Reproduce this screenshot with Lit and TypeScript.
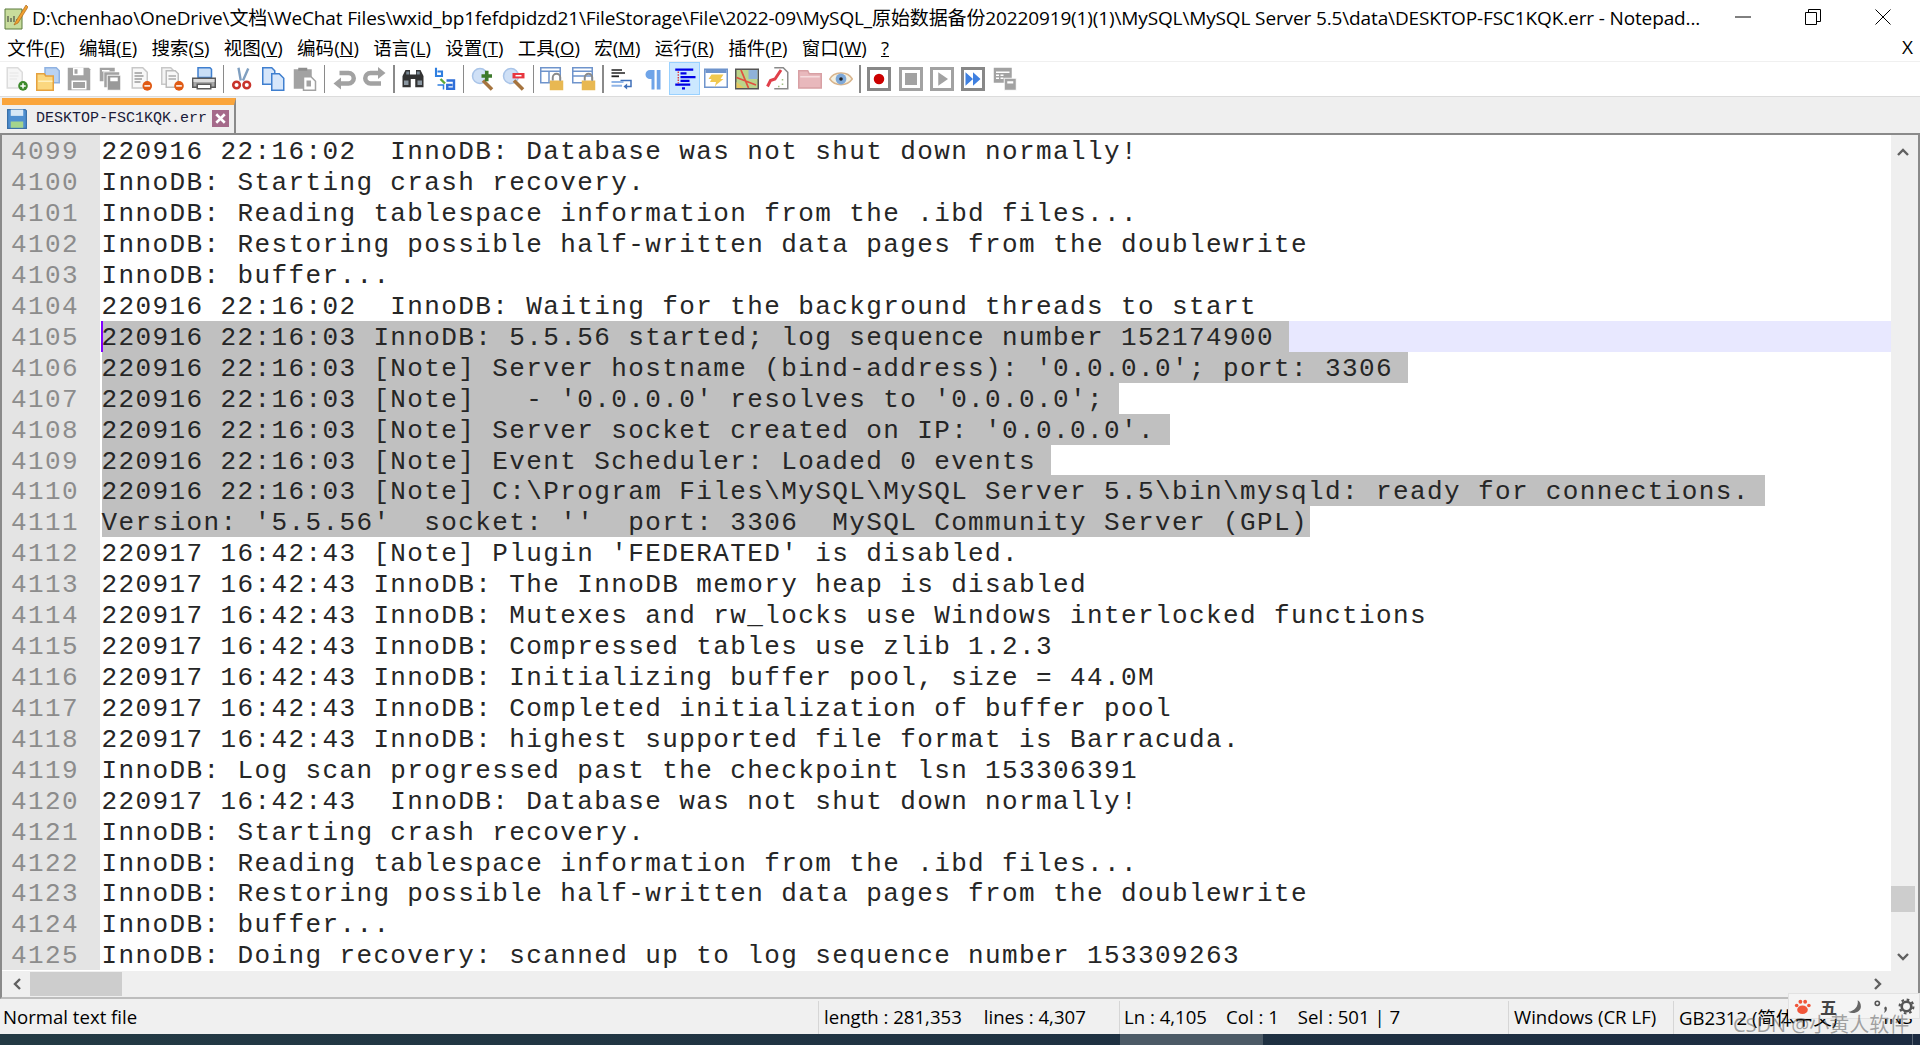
import { LitElement, html, css, svg, nothing } from "lit";
import { customElement } from "lit/decorators.js";

const G = "#a2a2a2";
const icons: Record<string, any> = {
  new: svg`<path d="M1.5.5h7l3 3v10.5h-10z" fill="#f6f6f6" stroke="#dcdcdc"/><path d="M3 4h6M3 6h6M3 8h5" stroke="#ececec"/><circle cx="12" cy="12.6" r="3.2" fill="#3c8a2c"/><path d="M10.2 12.6h3.6M12 10.8v3.6" stroke="#fff"/>`,
  open: svg`<path d="M6 .5h7.5l2 2v8H6z" fill="#b9d2f2" stroke="#8fb2e2"/><path d="M.5 4.5h5l1 1.5h5v9.5H.5z" fill="#fbd77f" stroke="#e5a13f"/><path d="M1.5 9h9.5v1H1.5z" fill="#fff0bd"/>`,
  save: svg`<path d="M.5.5h14l1 1v14H.5z" fill="${G}"/><path d="M4 .5h7v5H4zM3 9h10v6H3z" fill="#fff"/><path d="M5 1.5h2v3H5zM4 10h8v4H4z" fill="${G}"/>`,
  saveall: svg`<path d="M.5.5h10v9H.5z" fill="${G}"/><path d="M3 3h10v10H3z" fill="#fff"/><path d="M3.5 3.5h10v10h-10z" fill="${G}"/><path d="M5.5 5.5h9v10h-9z" fill="#999" stroke="#fff" stroke-width=".6"/><path d="M7.5 7h5v2.5h-5z" fill="#fff"/><path d="M2 2h5v1H2z" fill="#fff"/>`,
  close: svg`<path d="M1.5.5h7l3 3v10.5h-10z" fill="#f8f8f8" stroke="#c8c8c8"/><path d="M3 4h5M3 6h6M3 8h5M3 10h4" stroke="#9a9a9a"/><circle cx="11.5" cy="12.6" r="3.2" fill="#e05a14"/><path d="M9.6 12.6h3.8" stroke="#fff"/>`,
  closeall: svg`<path d="M.5.5h6l2 2v9h-8z" fill="#f4f4f4" stroke="#c8c8c8"/><path d="M3.5 2.5h6l2 2v9h-8z" fill="#f8f8f8" stroke="#bcbcbc"/><path d="M5 6h5M5 8h5" stroke="#aaa"/><circle cx="12" cy="12.6" r="3.2" fill="#e05a14"/><path d="M10.1 12.6h3.8" stroke="#fff"/>`,
  print: svg`<path d="M4 .5h8l1 1V7H4z" fill="#c9def6" stroke="#3f7fcf"/><path d="M.5 7.5h15v6H.5z" fill="#a8a8a8" stroke="#5a5a5a"/><path d="M1 8h14v2H1z" fill="#dcdcdc"/><path d="M3.5 11.5h9v3h-9z" fill="#fff" stroke="#5a5a5a"/>`,
  cut: svg`<path d="M6.5 9 5 .5 M8 9 11.5 1" stroke="#7f9fc0" stroke-width="1.6"/><circle cx="3.7" cy="12" r="2.2" fill="none" stroke="#c8332b" stroke-width="1.7"/><circle cx="10.5" cy="12" r="2.2" fill="none" stroke="#c8332b" stroke-width="1.7"/>`,
  copy: svg`<path d="M.5.5h6l2 2v9h-8z" fill="#d6e6fa" stroke="#3f7fcf"/><path d="M6.5 4.5h5l3 3v8h-8z" fill="#d6e6fa" stroke="#3f7fcf"/>`,
  paste: svg`<path d="M.5 1.5h12v13H.5z" fill="${G}" /><path d="M3.5.5h6v2h-6z" fill="#8e8e8e"/><path d="M7 6.5h5l3 3v6H7z" fill="#fff" stroke="${G}"/><path d="M9 9h3v4H9z" fill="${G}"/>`,
  undo: svg`<path d="M5 4h6a3 3 0 0 1 0 7H4" fill="none" stroke="${G}" stroke-width="3"/><path d="M1 11 6 7v8z" fill="${G}"/>`,
  redo: svg`<path d="M11 4H5a3 3 0 0 0 0 7h7" fill="none" stroke="${G}" stroke-width="3"/><path d="M15 5 10 1v8z" fill="${G}" transform="translate(0 -1)"/>`,
  find: svg`<path d="M1 6 3 2h3v3h4V2h3l2 4v7.5H9.5V8h-3v5.5H1z" fill="#333"/><path d="M2 9h3v3H2zM11 9h3v3h-3z" fill="#8a96a0"/><path d="M3.5 3h2v2h-2zM10.5 3h2v2h-2z" fill="#7c8a96"/>`,
  replace: svg`<path d="M2 .5v5.5h4V3H3" fill="none" stroke="#2f7fe0" stroke-width="1.4"/><path d="M9 9h5v5.5H9.5V12H13" fill="none" stroke="#2f6fd8" stroke-width="1.6"/><path d="M5 8l3 3" stroke="#5aa83c" stroke-width="1.6"/><path d="M3 12h4v3" fill="none" stroke="#2f7fe0"/>`,
  zoomin: svg`<circle cx="6" cy="6" r="5" fill="#cfe0f6" stroke="#a9c4e8"/><path d="M8 9l6 6" stroke="#a6743f" stroke-width="2.4"/><path d="M10.5 2.5v7M7 6h7" stroke="#3c7a2c" stroke-width="2.4"/>`,
  zoomout: svg`<circle cx="6" cy="6" r="5" fill="#cfe0f6" stroke="#a9c4e8"/><path d="M8 9l6 6" stroke="#a6743f" stroke-width="2.4"/><path d="M7 4h8v3.6H7z" fill="#e8363f"/><path d="M9 5.8h4" stroke="#fff"/>`,
  syncv: svg`<path d="M.5.5h13v10H.5zM.5 2.8h13M6 3v7" fill="#fff" stroke="#6f94cc"/><path d="M6.5 9h9v6.5h-9z" fill="#e8b852"/><path d="M8.5 9V7a2.5 2.5 0 0 1 5 0v2" fill="none" stroke="#8a8a8a" stroke-width="1.3"/>`,
  synch: svg`<path d="M.5.5h13v10H.5zM.5 2.8h13M.5 6h13" fill="#fff" stroke="#6f94cc"/><path d="M6.5 9h9v6.5h-9z" fill="#e8b852"/><path d="M8.5 9V7a2.5 2.5 0 0 1 5 0v2" fill="none" stroke="#8a8a8a" stroke-width="1.3"/>`,
  wrap: svg`<path d="M1 2h7M1 4h9" stroke="#222" stroke-width=".9"/><path d="M1 6.2h5" stroke="#222" stroke-width="1.2"/><path d="M7 9h7v4h-3" fill="none" stroke="#3f6fb8"/><path d="M9 13l2.400-2v4z" fill="#3f6fb8"/><path d="M1 10h8M1 12.500h7" stroke="#8fb4e6" stroke-width="1.2"/>`,
  para: svg`<path d="M10 2H6a3 3 0 0 0 0 6h1v7h2V2zM10 2h3v13h-2.500V2z" fill="#6fa4e8"/>`,
  indent: svg`<path d="M1.500 1h12v1.500h-12zM5 3.500h4v1.500H5zM5 6h10v1.500H5zM5 8.500h6V10H5zM1.500 11h10v1.500h-10zM6 13.500h2V15H6z" fill="#0000e6"/><path d="M3.500 3v8" stroke="#e02020" stroke-dasharray="1 .8" stroke-width=".8"/>`,
  docmap: svg`<path d="M.5 1.500h15v12H.5z" fill="#fff" stroke="#6f94cc"/><path d="M1 2h14v2H1z" fill="#6f94cc"/><path d="M5 5h8l-2 3h2l-5 4-1 2 1-4H4l1-2H3z" fill="#f0c850"/>`,
  map: svg`<path d="M.5 1.500h15v13H.5z" fill="#bcd48a" stroke="#555"/><path d="M9 2h6v6H9z" fill="#8fb2d8"/><path d="M4 2l5 12M1 7l13 5" stroke="#e05040" stroke-width="1.2"/><path d="M1 10l5 4H1z" fill="#e8c860"/>`,
  func: svg`<path d="M5.500.5h6l3 3v11h-9" fill="#fff" stroke="#8a8a8a"/><path d="M10 2 6 8 3 9 1 13" fill="none" stroke="#e0404a" stroke-width="2"/><path d="M11 8v1M11 11v1M8 13h1" stroke="#a0c080"/>`,
  folder: svg`<path d="M.5 2.500h6l1 2h8v9.500H.5z" fill="#e8b8bc" stroke="#d8a0a4"/><path d="M1.500 6h13v1h-13z" fill="#f6dcde"/>`,
  eye: svg`<path d="M.5 8C3 3.500 12 2 15.500 8 12 13 4 13 .5 8z" fill="#f4f0e0" stroke="#d8b48c"/><circle cx="8" cy="8" r="3.600" fill="#7ea8d8"/><circle cx="8" cy="8" r="1.200" fill="#222"/>`,
  rec: svg`<path d="M1 1h14v14H1z" fill="#fff" stroke="#888" stroke-width="2"/><circle cx="8" cy="8" r="3.500" fill="#cc0000"/>`,
  stop: svg`<path d="M1 1h14v14H1z" fill="#fff" stroke="#a2a2a2" stroke-width="2"/><path d="M4 4h8v8H4z" fill="#a2a2a2"/>`,
  play: svg`<path d="M1 1h14v14H1z" fill="#fff" stroke="#a2a2a2" stroke-width="2"/><path d="M5.500 3.500 12 8l-6.500 4.500z" fill="#a2a2a2"/>`,
  playall: svg`<path d="M1 1h14v14H1z" fill="#fff" stroke="#888" stroke-width="2"/><path d="M3 3.500 8 8l-5 4.500zM8 3.500 13 8l-5 4.500z" fill="#3f80e0"/>`,
  savemacro: svg`<path d="M.5.5h12v10h-12z" fill="${G}"/><path d="M2 3h9v1H2zM2 5h2v1H2zM5 5h2v1H5zM2 7h2v1H2zM5 7h2v1H5z" fill="#fff"/><path d="M7.500 7.500h8v8h-8z" fill="${G}" stroke="#fff" stroke-width=".6"/><path d="M9.500 9.500h4v1.500h-4z" fill="#fff"/>`,
};

const tools = [
  ["new", "open", "save", "saveall", "close", "closeall", "print"],
  ["cut", "copy", "paste"],
  ["undo", "redo"],
  ["find", "replace"],
  ["zoomin", "zoomout"],
  ["syncv", "synch"],
  ["wrap", "para", "indent", "docmap", "map", "func", "folder", "eye"],
  ["rec", "stop", "play", "playall", "savemacro"],
];

const menus: [string, string][] = [
  ["文件", "F"], ["编辑", "E"], ["搜索", "S"], ["视图", "V"], ["编码", "N"], ["语言", "L"],
  ["设置", "T"], ["工具", "O"], ["宏", "M"], ["运行", "R"], ["插件", "P"], ["窗口", "W"],
];

const lines: string[] = [
  "220916 22:16:02  InnoDB: Database was not shut down normally!",
  "InnoDB: Starting crash recovery.",
  "InnoDB: Reading tablespace information from the .ibd files...",
  "InnoDB: Restoring possible half-written data pages from the doublewrite",
  "InnoDB: buffer...",
  "220916 22:16:02  InnoDB: Waiting for the background threads to start",
  "220916 22:16:03 InnoDB: 5.5.56 started; log sequence number 152174900",
  "220916 22:16:03 [Note] Server hostname (bind-address): '0.0.0.0'; port: 3306",
  "220916 22:16:03 [Note]   - '0.0.0.0' resolves to '0.0.0.0';",
  "220916 22:16:03 [Note] Server socket created on IP: '0.0.0.0'.",
  "220916 22:16:03 [Note] Event Scheduler: Loaded 0 events",
  "220916 22:16:03 [Note] C:\\Program Files\\MySQL\\MySQL Server 5.5\\bin\\mysqld: ready for connections.",
  "Version: '5.5.56'  socket: ''  port: 3306  MySQL Community Server (GPL)",
  "220917 16:42:43 [Note] Plugin 'FEDERATED' is disabled.",
  "220917 16:42:43 InnoDB: The InnoDB memory heap is disabled",
  "220917 16:42:43 InnoDB: Mutexes and rw_locks use Windows interlocked functions",
  "220917 16:42:43 InnoDB: Compressed tables use zlib 1.2.3",
  "220917 16:42:43 InnoDB: Initializing buffer pool, size = 44.0M",
  "220917 16:42:43 InnoDB: Completed initialization of buffer pool",
  "220917 16:42:43 InnoDB: highest supported file format is Barracuda.",
  "InnoDB: Log scan progressed past the checkpoint lsn 153306391",
  "220917 16:42:43  InnoDB: Database was not shut down normally!",
  "InnoDB: Starting crash recovery.",
  "InnoDB: Reading tablespace information from the .ibd files...",
  "InnoDB: Restoring possible half-written data pages from the doublewrite",
  "InnoDB: buffer...",
  "InnoDB: Doing recovery: scanned up to log sequence number 153309263",
];

@customElement("app-root")
export class AppRoot extends LitElement {
  static styles = css`
    :host { display: block; width: 1920px; height: 1045px; overflow: hidden; position: relative;
      font-family: "Open Sans", "Noto Sans CJK SC", sans-serif; color: #000; background: #f0f0f0; }
    .app { display: flex; flex-direction: column; height: 100%; }
    .title { height: 34px; background: #fff; display: flex; align-items: center; padding: 0 2px 0 4px; font-size: 19px; letter-spacing: -0.13px; }
    .title .logo { width: 24px; height: 26px; flex: none; }
    .title .t { margin-left: 4px; width: 1676px; flex: none; white-space: nowrap; overflow: hidden; }
    .winbtns { margin-left: auto; display: flex; }
    .winbtns svg { width: 16px; height: 16px; display: block; }
    .winbtns div { width: 70px; height: 34px; display: flex; align-items: center; justify-content: center; }
    .menu { height: 27px; background: #fff; display: flex; align-items: center; font-size: 18.5px; border-bottom: 1px solid #f0f0f0; }
    .menu span { padding: 0 7.15px; white-space: nowrap; }
    .menu .x { margin-left: auto; padding: 0 7px 0 0; font-size: 19px; }
    .tools { height: 34px; background: #fff; display: flex; align-items: center; padding-left: 1px; border-bottom: 1px solid #dcdcdc; }
    .slot { width: 31.3px; height: 33px; flex: none; display: flex; align-items: center; justify-content: center; box-sizing: border-box; }
    .slot svg { width: 24px; height: 24px; display: block; }
    .slot.on { background: #cce8ff; border: 1px solid #99d1ff; }
    .sep { width: 7px; height: 28px; flex: none; display: flex; justify-content: center; }
    .sep::before { content: ""; width: 1.5px; background: #8a8a8a; }
    .tabs { height: 37px; background: #efefef; padding-left: 2px; display: flex; }
    .tab { width: 234px; box-sizing: border-box; margin-top: 1px; border-top: 7px solid #faa53c; border-right: 2px solid #8a8a8a;
      display: flex; align-items: center; padding-left: 5px; font: 15px "Liberation Mono", monospace; color: #1a1a3a; }
    .tab svg.s { width: 20px; height: 20px; flex: none; }
    .tab .n { margin-left: 9px; }
    .tab svg.c { width: 17px; height: 17px; margin-left: 5px; flex: none; }
    .editor { display: flex; flex: none; height: 862px; border-top: 2px solid #8a8a8a; border-left: 2px solid #8a8a8a; border-right: 2px solid #8a8a8a; border-bottom: 2px solid #bdbdbd; box-sizing: content-box; background: #efefef; }
    .left { flex: 1; display: flex; flex-direction: column; min-width: 0; }
    .rows { flex: none; background: #fff; height: 835.2px; overflow: hidden; }
    .row { height: 30.93px; display: flex; font: 26px/30.93px "Liberation Mono", monospace; letter-spacing: 1.39px; color: #262626; white-space: pre; }
    .num { width: 98px; flex: none; box-sizing: border-box; padding: 2px 0 0 9px; background: #e4e4e4; color: #8c8c8c; margin-right: 1.5px; }
    .code { flex: 1; min-width: 0; }
    .txt { display: block; position: relative; top: 2px; }
    .cur .code { background: #e8e8ff; position: relative; }
    .cur .code::before { content: ""; position: absolute; left: -1px; top: 0; width: 2px; height: 100%; background: #8000ff; }
    .sel { background: #c0c0c0; display: block; width: fit-content; height: 100%; }
    .sel.eol { padding-right: 15px; }
    .sel.last { padding-right: 2px; }
    .hbar { flex: 1; display: flex; align-items: center; }
    .hbar svg { width: 14px; height: 16px; flex: none; }
    .hthumb { width: 92px; height: 24px; background: #cdcdcd; margin-left: 6px; }
    .vbar { width: 24px; margin-right: 3px; flex: none; display: flex; flex-direction: column; align-items: center; }
    .vbar svg { width: 16px; height: 14px; flex: none; }
    .vbar .up { margin-top: 10px; }
    .vbar .thumb { width: 100%; height: 26px; background: #cdcdcd; margin-top: auto; }
    .vbar .down { margin-top: 38px; margin-bottom: 33px; }
    .status { height: 35px; display: flex; align-items: stretch; font-size: 18.6px; white-space: nowrap; background: #f0f0f0; }
    .seg { box-sizing: border-box; flex: none; display: flex; align-items: center; padding-left: 3px; padding-bottom: 2px; border-right: 1px solid #d6d6d6; margin-top: 2px; }
    .s1 { width: 819px; }
    .s2 { width: 301px; padding-left: 5px; gap: 22px; }
    .s3 { width: 389px; padding-left: 4px; gap: 19px; }
    .s4 { width: 165px; padding-left: 5px; }
    .s5 { flex: 1; min-width: 0; padding-left: 5px; border: 0; gap: 46px; }
    .task { height: 11px; display: flex; background: linear-gradient(90deg, #233a44, #1c2b40); }
    .task .hi { margin-left: 1120px; width: 143px; background: #4c5a66; }
    .task .d { margin-left: auto; margin-right: 7px; width: 1px; background: #5a6674; }
    .ime { position: absolute; left: 1788px; top: 993px; width: 132px; height: 26px; box-sizing: border-box; background: #f4f4f4; border: 1px solid #e2e2e2;
      display: flex; align-items: center; gap: 9px; padding-left: 5px; }
    .ime svg { width: 17px; height: 17px; display: block; flex: none; }
    .ime b { font: bold 17px "Noto Sans CJK SC", sans-serif; color: #444; }
    .wm { position: absolute; left: 1733px; top: 1009px; font-size: 20px; color: rgba(90, 90, 90, 0.55); white-space: nowrap; }
  `;

  private row(text: string, i: number) {
    const n = 4099 + i;
    const selected = n >= 4105 && n <= 4111;
    const cls = n === 4111 ? "sel last" : "sel eol";
    return html`<div class="row ${n === 4105 ? "cur" : ""}">
      <div class="num">${n}</div>
      <div class="code">${selected ? html`<div class=${cls}><span class="txt">${text}</span></div>` : html`<span class="txt">${text}</span>`}</div>
    </div>`;
  }

  render() {
    return html`<div class="app">
      <div class="title">
        <svg class="logo" viewBox="0 0 24 26"><path d="M1 5h17v20H1z" fill="#c8dc9c" stroke="#5a7a3c"/><path d="M4 12v6M7 14v4M10 12v6M13 15v3" stroke="#333"/><path d="M22 1 12 17l-2 4 4-2L24 3z" fill="#f0a030" stroke="#a05a10" stroke-width=".6"/></svg>
        <div class="t">D:\\chenhao\\OneDrive\\文档\\WeChat Files\\wxid_bp1fefdpidzd21\\FileStorage\\File\\2022-09\\MySQL_原始数据备份20220919(1)(1)\\MySQL\\MySQL Server 5.5\\data\\DESKTOP-FSC1KQK.err - Notepad...</div>
        <div class="winbtns">
          <div><svg viewBox="0 0 16 16"><path d="M0 8h16" stroke="#000"/></svg></div>
          <div><svg viewBox="0 0 16 16"><path d="M.5 3.500h11v12H.5zM3.500 3.500v-3h12v12h-4" fill="none" stroke="#000"/></svg></div>
          <div><svg viewBox="0 0 16 16"><path d="M.5.5l15 15M15.500.5l-15 15" stroke="#000"/></svg></div>
        </div>
      </div>
      <div class="menu">
        ${menus.map(([a, k]) => html`<span>${a}(<u>${k}</u>)</span>`)}
        <span><u>?</u></span>
        <span class="x">X</span>
      </div>
      <div class="tools">
        ${tools.map((g, gi) => html`${gi ? html`<div class="sep"></div>` : nothing}${g.map(
          (k) => html`<div class="slot ${k === "indent" ? "on" : ""}"><svg viewBox="0 0 16 16">${icons[k]}</svg></div>`
        )}`)}
      </div>
      <div class="tabs">
        <div class="tab">
          <svg class="s" viewBox="0 0 16 16"><path d="M.5.5h14l1 1v14H.5z" fill="#4f8fd0" stroke="#3a70a8"/><path d="M3 .5h10v5H3z" fill="#d8e8f6"/><path d="M3 10h10v5H3z" fill="#a4d48c"/></svg>
          <span class="n">DESKTOP-FSC1KQK.err</span>
          <svg class="c" viewBox="0 0 16 16"><path d="M0 0h16v16H0z" fill="#a56a8a"/><path d="M4 4l8 8M12 4l-8 8" stroke="#fff" stroke-width="2.400"/></svg>
        </div>
      </div>
      <div class="editor">
        <div class="left">
          <div class="rows">${lines.map((l, i) => this.row(l, i))}</div>
          <div class="hbar">
            <svg style="margin-left:8px" viewBox="0 0 14 16"><path d="M10 3 5 8l5 5" fill="none" stroke="#606060" stroke-width="2.400"/></svg>
            <div class="hthumb"></div>
            <svg style="margin-left:auto;margin-right:6px" viewBox="0 0 14 16"><path d="M4 3l5 5-5 5" fill="none" stroke="#606060" stroke-width="2.400"/></svg>
          </div>
        </div>
        <div class="vbar">
          <svg class="up" viewBox="0 0 16 14"><path d="M3 10l5-5 5 5" fill="none" stroke="#606060" stroke-width="2.400"/></svg>
          <div class="thumb"></div>
          <svg class="down" viewBox="0 0 16 14"><path d="M3 4l5 5 5-5" fill="none" stroke="#606060" stroke-width="2.400"/></svg>
        </div>
      </div>
      <div class="status">
        <div class="seg s1">Normal text file</div>
        <div class="seg s2"><span>length : 281,353</span><span>lines : 4,307</span></div>
        <div class="seg s3"><span>Ln : 4,105</span><span>Col : 1</span><span>Sel : 501 | 7</span></div>
        <div class="seg s4">Windows (CR LF)</div>
        <div class="seg s5"><span>GB2312 (简体中文)</span><span>INS</span></div>
      </div>
      <div class="task"><div class="hi"></div><div class="d"></div></div>
    </div>
    <div class="ime">
      <svg viewBox="0 0 16 16"><ellipse cx="8" cy="11" rx="5" ry="4" fill="#f0563a"/><circle cx="2.500" cy="7" r="1.700" fill="#f0563a"/><circle cx="6" cy="3.500" r="1.800" fill="#f0563a"/><circle cx="10.500" cy="3.500" r="1.800" fill="#f0563a"/><circle cx="14" cy="7" r="1.700" fill="#f0563a"/></svg>
      <b>五</b>
      <svg viewBox="0 0 16 16"><path d="M11 2c1 6-3 10-9 11 5 3 12 0 12-5 0-3-1-5-3-6z" fill="#666"/></svg>
      <svg viewBox="0 0 16 16"><circle cx="5" cy="5" r="2" fill="none" stroke="#555" stroke-width="1.500"/><path d="M13 8a2 2 0 0 1 1 2c0 2-1 3-3 4 1-1 1-2 1-3a1.800 1.800 0 0 1 1-3z" fill="#555"/></svg>
      <svg viewBox="0 0 16 16"><circle cx="8" cy="8" r="4.500" fill="none" stroke="#555" stroke-width="2.500"/><circle cx="8" cy="8" r="6.500" fill="none" stroke="#555" stroke-width="2" stroke-dasharray="2.500 2.600"/></svg>
    </div>
    <div class="wm">CSDN @小黄人软件</div>`;
  }
}
